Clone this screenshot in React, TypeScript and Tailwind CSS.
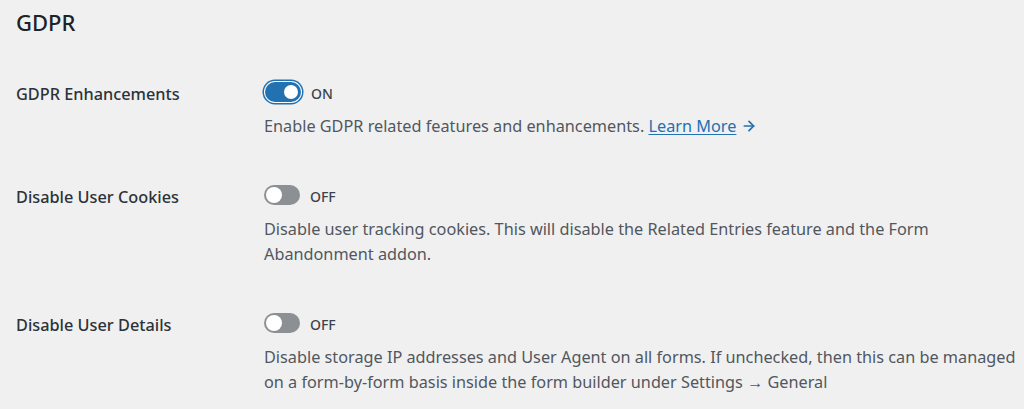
import React from "react";
import { ArrowRight } from "lucide-react";

function Toggle({ on }: { on: boolean }) {
  if (on) {
    return (
      <span className="relative ml-[2px] inline-flex h-5 w-9 items-center rounded-full bg-[#2271b1] shadow-[0_0_0_1px_#ffffff,0_0_0_2.5px_#2271b1]">
        <span className="absolute right-[3px] h-[14px] w-[14px] rounded-full bg-white" />
      </span>
    );
  }
  return (
    <span className="relative ml-[1px] inline-flex h-5 w-9 items-center rounded-full bg-[#8c8f94]">
      <span className="absolute left-[2px] h-4 w-4 rounded-full bg-white" />
    </span>
  );
}

function Row({
  label,
  on,
  children,
}: {
  label: string;
  on: boolean;
  children: React.ReactNode;
}) {
  return (
    <div className="grid grid-cols-[263px_1fr]">
      <div className="flex h-6 items-center pt-[4px] pl-4 text-[16.3px] font-[550] text-[#2c3338]">
        {label}
      </div>
      <div>
        <div className="flex h-6 items-center gap-[10px]">
          <Toggle on={on} />
          <span className="pt-[3px] text-[14px] font-medium text-[#3c434a]">
            {on ? "ON" : "OFF"}
          </span>
        </div>
        <p className="mt-[10px] pl-[1px] text-[16.25px] leading-[25px] text-[#50575e]">{children}</p>
      </div>
    </div>
  );
}

export default function App() {
  return (
    <div
      className="min-h-[409px] w-[1024px] overflow-hidden bg-[#f0f0f1] pt-2"
      style={{ fontFamily: '"Noto Sans", "Open Sans", sans-serif' }}
    >
      <h2 className="pl-4 text-[22px] leading-[28px] font-medium text-[#1d2327]">GDPR</h2>
      <div className="mt-[44px] flex flex-col gap-[44px]">
        <Row label="GDPR Enhancements" on={true}>
          Enable GDPR related features and enhancements.{" "}
          <a className="text-[#2271b1] underline underline-offset-2">Learn More</a>
          <ArrowRight
            className="ml-[5px] inline-block align-[-2px] text-[#2271b1]"
            size={16}
            strokeWidth={2.6}
          />
        </Row>
        <Row label="Disable User Cookies" on={false}>
          Disable user tracking cookies. This will disable the Related Entries feature and the Form
          <br />
          Abandonment addon.
        </Row>
        <Row label="Disable User Details" on={false}>
          Disable storage IP addresses and User Agent on all forms. If unchecked, then this can be managed
          <br />
          on a form-by-form basis inside the form builder under Settings → General
        </Row>
      </div>
    </div>
  );
}
